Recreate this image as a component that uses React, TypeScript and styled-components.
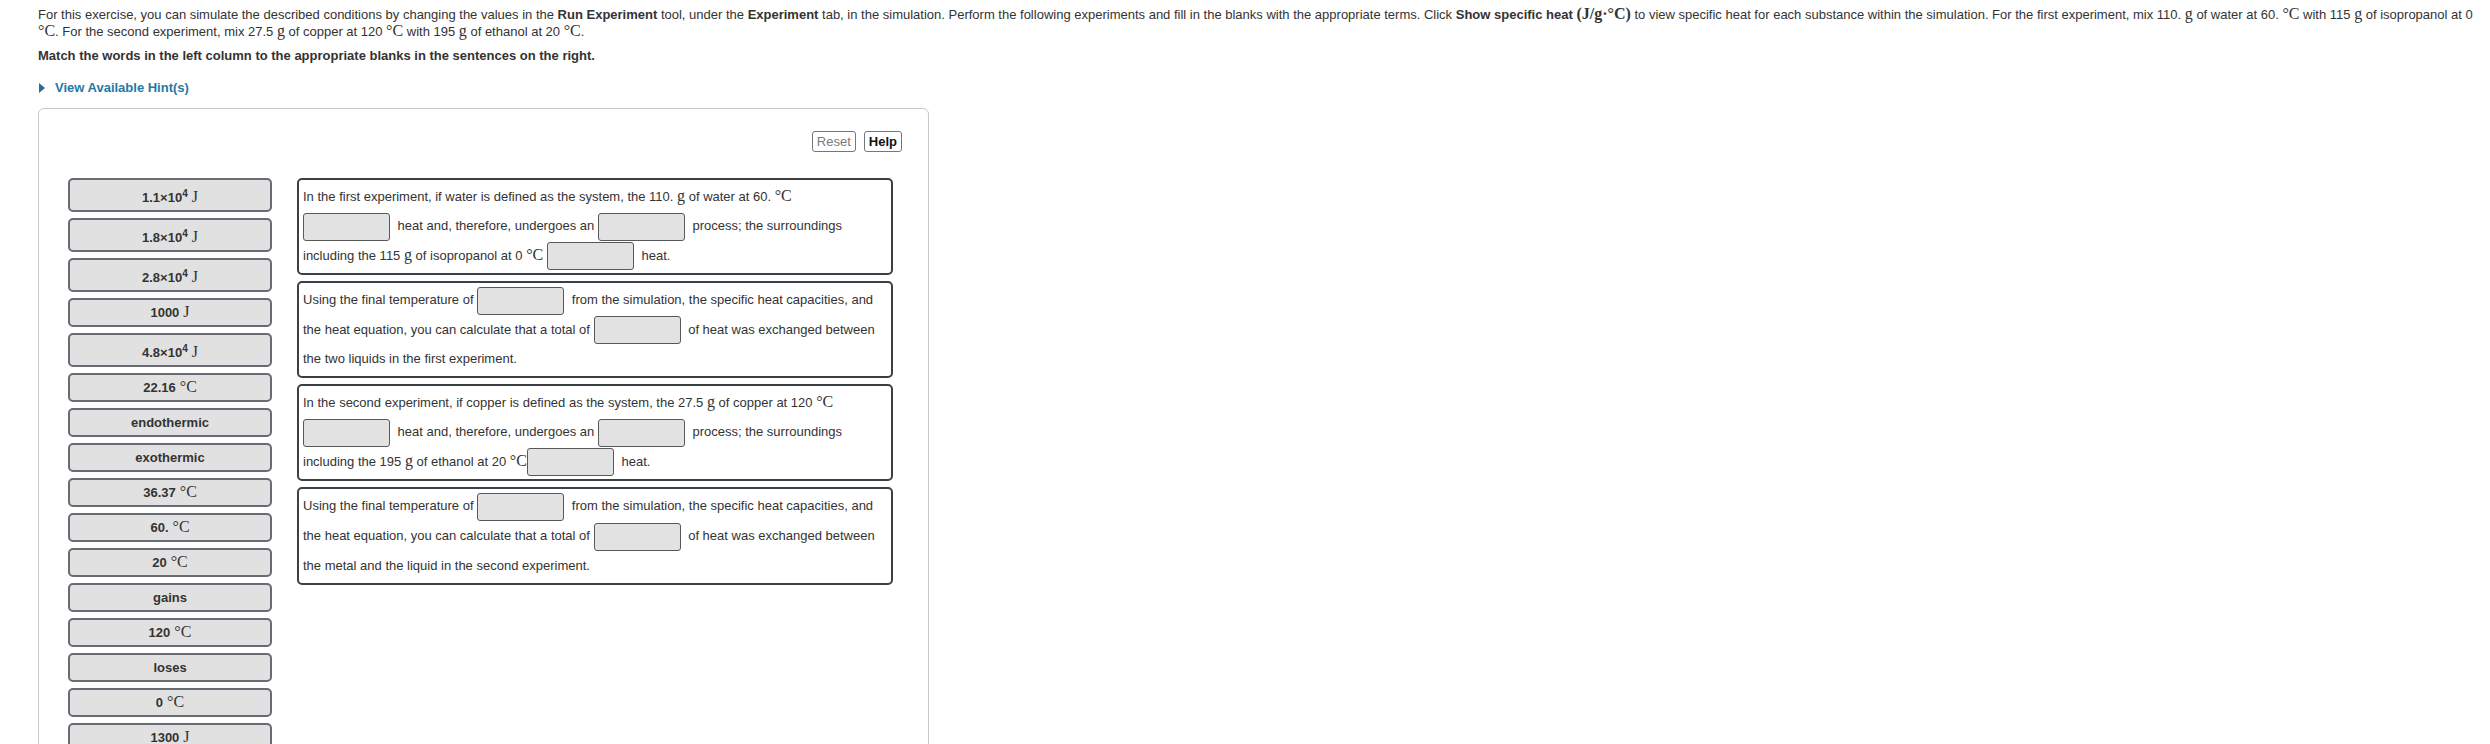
import styled, { createGlobalStyle } from "styled-components";

const GlobalStyle = createGlobalStyle`
  body {
    margin: 0;
    background: #fff;
    color: #333;
    font-family: "Liberation Sans", Arial, sans-serif;
    font-size: 13px;
  }
`;

type Chip = { value: string; sup?: string; unit?: string };

const chips: Chip[] = [
  { value: "1.1×10", sup: "4", unit: "J" },
  { value: "1.8×10", sup: "4", unit: "J" },
  { value: "2.8×10", sup: "4", unit: "J" },
  { value: "1000", unit: "J" },
  { value: "4.8×10", sup: "4", unit: "J" },
  { value: "22.16", unit: "°C" },
  { value: "endothermic" },
  { value: "exothermic" },
  { value: "36.37", unit: "°C" },
  { value: "60.", unit: "°C" },
  { value: "20", unit: "°C" },
  { value: "gains" },
  { value: "120", unit: "°C" },
  { value: "loses" },
  { value: "0", unit: "°C" },
  { value: "1300", unit: "J" },
];

function App() {
  return (
    <Page>
      <GlobalStyle />
      <Intro>
        For this exercise, you can simulate the described conditions by changing the values in the{" "}
        <b>Run Experiment</b> tool, under the <b>Experiment</b> tab, in the simulation. Perform the
        following experiments and fill in the blanks with the appropriate terms. Click{" "}
        <b>
          Show specific heat <M>(J/g·°C)</M>
        </b>{" "}
        to view specific heat for each substance within the simulation. For the first experiment, mix
        110. <M>g</M> of water at 60. <M>°C</M> with 115 <M>g</M> of isopropanol at 0 <M>°C</M>. For
        the second experiment, mix 27.5 <M>g</M> of copper at 120 <M>°C</M> with 195 <M>g</M> of
        ethanol at 20 <M>°C</M>.
      </Intro>
      <Prompt>Match the words in the left column to the appropriate blanks in the sentences on the right.</Prompt>
      <HintToggle>
        <Caret />
        View Available Hint(s)
      </HintToggle>

      <Panel>
        <Toolbar>
          <ToolButton $muted>Reset</ToolButton>
          <ToolButton>Help</ToolButton>
        </Toolbar>
        <Board>
          <ChipColumn>
            {chips.map((c, i) => (
              <ChipItem key={i} $tall={!!c.sup}>
                <ChipLabel>
                  {c.value}
                  {c.sup && <Sup>{c.sup}</Sup>}
                  {c.unit && <ChipUnit>{c.unit}</ChipUnit>}
                </ChipLabel>
              </ChipItem>
            ))}
          </ChipColumn>

          <Sentences>
            <SentenceBox>
              In the first experiment, if water is defined as the system, the 110. <M>g</M> of water at
              60. <M>°C</M> <Blank /> heat and, therefore, undergoes an <Blank /> process; the
              surroundings including the 115 <M>g</M> of isopropanol at 0 <M>°C</M> <Blank /> heat.
            </SentenceBox>
            <SentenceBox>
              Using the final temperature of <Blank /> from the simulation, the specific heat
              capacities, and the heat equation, you can calculate that a total of <Blank /> of heat
              was exchanged between the two liquids in the first experiment.
            </SentenceBox>
            <SentenceBox>
              In the second experiment, if copper is defined as the system, the 27.5 <M>g</M> of copper
              at 120 <M>°C</M> <Blank /> heat and, therefore, undergoes an <Blank /> process; the
              surroundings including the 195 <M>g</M> of ethanol at 20 <M>°C</M>
              <Blank /> heat.
            </SentenceBox>
            <SentenceBox>
              Using the final temperature of <Blank /> from the simulation, the specific heat
              capacities, and the heat equation, you can calculate that a total of <Blank /> of heat
              was exchanged between the metal and the liquid in the second experiment.
            </SentenceBox>
          </Sentences>
        </Board>
      </Panel>
    </Page>
  );
}

export default App;

const Page = styled.div`
  padding: 6px 4px 0 38px;
`;

// inline math: units and symbols set in a serif face
const M = styled.span`
  font-family: "Liberation Serif", "Times New Roman", serif;
  font-size: 16px;
  line-height: 1;
`;

const Intro = styled.p`
  margin: 0;
  line-height: 17px;
`;

const Prompt = styled.p`
  margin: 7px 0 0;
  line-height: 17px;
  font-weight: bold;
`;

const HintToggle = styled.div`
  display: flex;
  align-items: center;
  margin-top: 15px;
  line-height: 17px;
  font-weight: bold;
  color: #1f7aa5;
  cursor: pointer;
`;

const Caret = styled.span`
  width: 0;
  height: 0;
  margin: 0 10px 0 1px;
  border-top: 5px solid transparent;
  border-bottom: 5px solid transparent;
  border-left: 6px solid #2a6d92;
`;

const Panel = styled.div`
  margin-top: 12px;
  width: 891px;
  box-sizing: border-box;
  border: 1px solid #c9c9c9;
  border-radius: 6px;
  padding: 22px 26px 40px 29px;
`;

const Toolbar = styled.div`
  display: flex;
  justify-content: flex-end;
  gap: 8px;
`;

const ToolButton = styled.button<{ $muted?: boolean }>`
  height: 21px;
  padding: 0 4px;
  border: 1px solid #6f7a80;
  border-radius: 3px;
  background: #fff;
  font-family: "Liberation Sans", Arial, sans-serif;
  font-size: 13px;
  font-weight: ${(p) => (p.$muted ? "normal" : "bold")};
  color: ${(p) => (p.$muted ? "#7a7a7a" : "#111")};
  cursor: pointer;
`;

const Board = styled.div`
  display: flex;
  align-items: flex-start;
  gap: 25px;
  margin-top: 26px;
`;

const ChipColumn = styled.div`
  display: flex;
  flex-direction: column;
  gap: 6px;
  width: 204px;
  flex-shrink: 0;
`;

const ChipItem = styled.div<{ $tall?: boolean }>`
  display: flex;
  align-items: center;
  justify-content: center;
  box-sizing: border-box;
  height: ${(p) => (p.$tall ? 34 : 29)}px;
  padding: ${(p) => (p.$tall ? "4px 6px 0" : "0 6px")};
  border: 2px solid #6a6a75;
  border-radius: 5px;
  background: #e1e1e1;
  font-weight: bold;
  color: #333;
  cursor: grab;
`;

const ChipLabel = styled.span`
  line-height: 17px;
  white-space: nowrap;
`;

const Sup = styled.sup`
  font-size: 10px;
  line-height: 0;
  vertical-align: 5px;
`;

const ChipUnit = styled(M)`
  margin-left: 4px;
  font-weight: normal;
`;

const Sentences = styled.div`
  display: flex;
  flex-direction: column;
  gap: 6px;
  width: 596px;
`;

const SentenceBox = styled.div`
  box-sizing: border-box;
  padding: 2px 12px 3px 4px;
  border: 2px solid #3b4045;
  border-radius: 5px;
  line-height: 29px;
`;

const Blank = styled.span`
  display: inline-block;
  box-sizing: border-box;
  width: 87px;
  height: 28px;
  margin-right: 4px;
  vertical-align: middle;
  border: 1.5px solid #595959;
  border-radius: 3px;
  background: #e2e2e2;
`;
